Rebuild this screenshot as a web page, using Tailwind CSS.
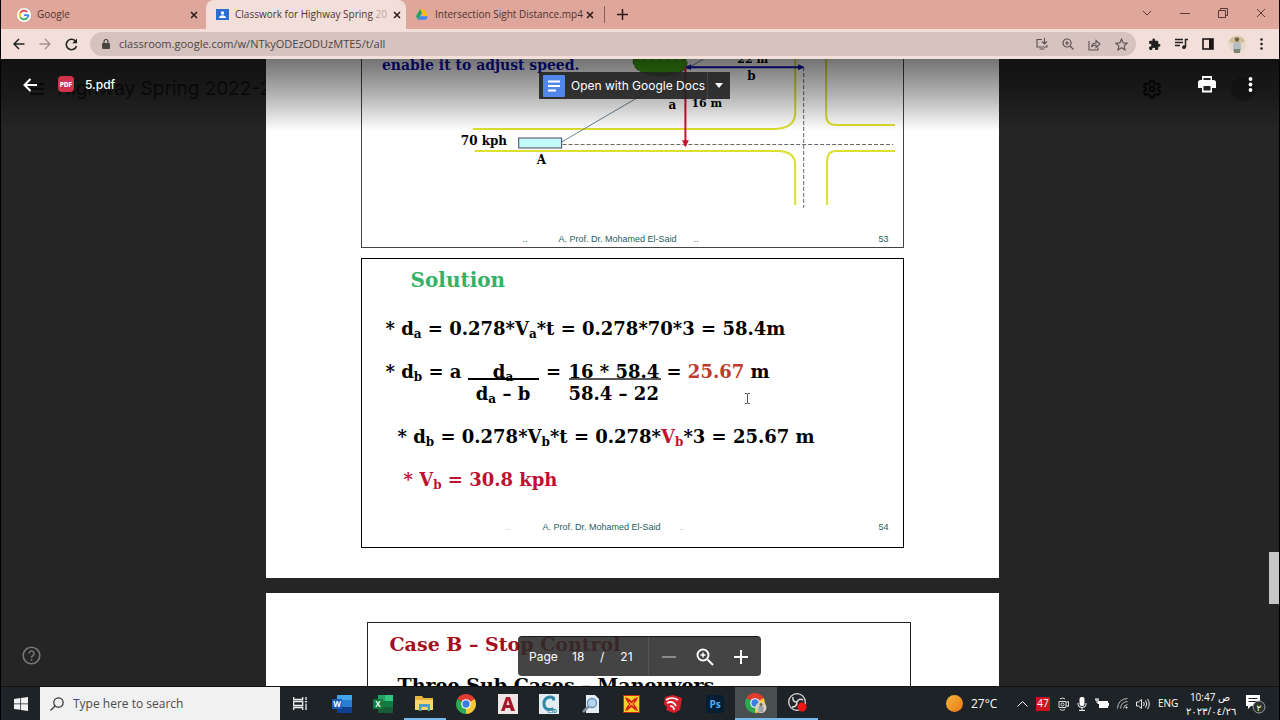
<!DOCTYPE html>
<html lang="en">
<head>
    <meta charset="UTF-8">
    <meta name="viewport" content="width=device-width, initial-scale=1.0">
    <title>5.pdf - Classwork for Highway Spring 2022</title>
    <script src="https://cdn.jsdelivr.net/npm/@tailwindcss/browser@4"></script>
</head>
<body class="bg-black font-['Open_Sans',sans-serif]">
<div class="flex flex-col h-screen px-px overflow-hidden">

    <!-- Tab strip -->
    <div class="flex items-stretch h-[29px] shrink-0 bg-[#dfa79b] text-[10px] text-[#4f3330]">
        <div class="flex items-center w-[205px] pl-4 pr-1">
            <svg class="size-[14px] mr-[6px]" viewBox="0 0 24 24"><circle cx="12" cy="12" r="12" fill="#fff"/><path d="M17.5 7A7.4 7.4 0 0 0 5.6 8.4" fill="none" stroke="#ea4335" stroke-width="3"/><path d="M5.6 8.4a7.4 7.4 0 0 0 0 7.2" fill="none" stroke="#fbbc05" stroke-width="3"/><path d="M5.6 15.6a7.4 7.4 0 0 0 11.4 2" fill="none" stroke="#34a853" stroke-width="3"/><path d="M17 17.6a7.4 7.4 0 0 0 2.4-5.6H12" fill="none" stroke="#4285f4" stroke-width="3"/></svg>
            <span class="flex-1">Google</span>
            <button aria-label="Close tab" class="p-1"><svg class="size-2" viewBox="0 0 8 8" stroke="#2b1a18" stroke-width="1.5"><path d="M1 1l6 6M7 1l-6 6"/></svg></button>
        </div>
        <div class="flex items-center w-[200px] pl-[10px] pr-[5px] rounded-t-lg bg-[#f3dfd9]">
            <svg class="w-[13px] h-[11px] mr-[6px] shrink-0" viewBox="0 0 26 22"><rect width="26" height="22" fill="#2a6fd0"/><circle cx="13" cy="8" r="3.4" fill="#fff"/><path d="M6 18c0-4 4-5.500 7-5.500s7 1.500 7 5.500z" fill="#fff"/></svg>
            <span class="flex-1 whitespace-nowrap">Classwork for Highway Spring <span class="text-[#b9a39f]">20</span></span>
            <button aria-label="Close tab" class="py-1"><svg class="size-2" viewBox="0 0 8 8" stroke="#2b1a18" stroke-width="1.5"><path d="M1 1l6 6M7 1l-6 6"/></svg></button>
        </div>
        <div class="flex items-center w-[198px] pl-[10px] pr-[10px]">
            <svg class="w-3 h-[11px] mr-[7px] shrink-0" viewBox="0 0 24 21"><path d="M8 0h8l8 14h-8z" fill="#fbbc05"/><path d="M8 0l4 7-8 14-4-7z" fill="#1ea362"/><path d="M8 14h16l-4 7H4z" fill="#4285f4"/></svg>
            <span class="flex-1 whitespace-nowrap">Intersection Sight Distance.mp4</span>
            <button aria-label="Close tab" class="py-1"><svg class="size-2" viewBox="0 0 8 8" stroke="#2b1a18" stroke-width="1.5"><path d="M1 1l6 6M7 1l-6 6"/></svg></button>
        </div>
        <div class="w-px my-[6px] bg-[#8a5f57]"></div>
        <button aria-label="New tab" class="px-3"><svg class="size-[11px]" viewBox="0 0 11 11" stroke="#2b1a18" stroke-width="1.5"><path d="M5.500 0v11M0 5.500h11"/></svg></button>
        <div class="flex items-center gap-7 ml-auto mr-[13px] pb-1">
            <button aria-label="Search tabs"><svg class="size-[10px]" viewBox="0 0 10 10" fill="none" stroke="#5a3833"><path d="M1 3l4 4 4-4"/></svg></button>
            <button aria-label="Minimize"><svg class="size-[10px]" viewBox="0 0 10 10" stroke="#5a3833"><path d="M0 5.500h10"/></svg></button>
            <button aria-label="Restore"><svg class="size-[10px]" viewBox="0 0 10 10" fill="none" stroke="#5a3833"><path d="M.5 2.500h7v7h-7zM2.500 2.500v-2h7v7h-2"/></svg></button>
            <button aria-label="Close"><svg class="size-[10px]" viewBox="0 0 10 10" stroke="#5a3833"><path d="M1 1l8 8M9 1l-8 8"/></svg></button>
        </div>
    </div>

    <!-- Address bar -->
    <div class="flex items-center h-[30px] shrink-0 bg-[#f3dfd9] pl-3 pr-4">
        <button aria-label="Back"><svg class="size-3" viewBox="0 0 12 12" fill="none" stroke="#222" stroke-width="1.5"><path d="M11.500 6H1M6 1L1 6l5 5"/></svg></button>
        <button aria-label="Forward" class="ml-[14px]"><svg class="size-3" viewBox="0 0 12 12" fill="none" stroke="#a3918e" stroke-width="1.300"><path d="M.5 6H11M6 1l5 5-5 5"/></svg></button>
        <button aria-label="Reload" class="ml-[14px]"><svg class="size-[13px]" viewBox="0 0 13 13" fill="none" stroke="#222" stroke-width="1.600"><path d="M10.800 3.500A5.200 5.200 0 1 0 11.500 8"/><path d="M12 .5v4.800H7.200z" fill="#222" stroke="none"/></svg></button>
        <div class="flex flex-1 items-center h-6 ml-3 pl-3 pr-2 rounded-full bg-[#d6c3c0]">
            <svg class="w-2 h-[10px]" viewBox="0 0 8 10"><rect y="4" width="8" height="6" rx="1" fill="#4a4443"/><path d="M2 4V2.500a2 2 0 0 1 4 0V4" fill="none" stroke="#4a4443" stroke-width="1.200"/></svg>
            <input aria-label="Address" type="text" value="classroom.google.com/w/NTkyODEzODUzMTE5/t/all" class="flex-1 ml-[9px] bg-transparent text-[11px] text-[#4d4543] outline-none">
            <div class="flex items-center gap-[14px] text-[#5c5150]">
                <button aria-label="Install"><svg class="size-3" viewBox="0 0 12 12" fill="none" stroke="currentColor" stroke-width="1.100"><path d="M6 1.500H1v7.500h10V7M3.500 11h5M8.500 0v5.500M6 3.500l2.500 2.500L11 3.500"/></svg></button>
                <button aria-label="Zoom"><svg class="size-3" viewBox="0 0 12 12" fill="none" stroke="currentColor" stroke-width="1.200"><circle cx="5" cy="5" r="4"/><path d="M8 8l3.500 3.500M3 5h4M5 3v4"/></svg></button>
                <button aria-label="Share"><svg class="size-[13px]" viewBox="0 0 13 13" fill="none" stroke="currentColor" stroke-width="1.100"><path d="M1 3v9h9V9.500M3.500 9c.5-3 2.500-4 4.500-4V2.500L12 6 8 9.500V7C6 7 4.500 7.500 3.500 9z"/></svg></button>
                <button aria-label="Bookmark"><svg class="size-[13px]" viewBox="0 0 24 24" fill="none" stroke="currentColor" stroke-width="2"><path d="M12 2l3 7 7.500.6-5.700 5 1.700 7.400-6.500-4-6.500 4 1.700-7.400-5.700-5L9 9z"/></svg></button>
            </div>
        </div>
        <div class="flex items-center gap-[14px] ml-3">
            <button aria-label="Extensions"><svg class="size-[13px]" viewBox="0 0 24 24" fill="#222"><path d="M20.500 11H19V7a2 2 0 0 0-2-2h-4V3.500a2.500 2.500 0 0 0-5 0V5H4a2 2 0 0 0-2 2v3.800h1.500a2.700 2.700 0 0 1 0 5.400H2V20a2 2 0 0 0 2 2h3.800v-1.500a2.700 2.700 0 0 1 5.400 0V22H17a2 2 0 0 0 2-2v-4h1.500a2.500 2.500 0 0 0 0-5z"/></svg></button>
            <button aria-label="Media"><svg class="w-[13px] h-3" viewBox="0 0 13 12" fill="none" stroke="#222" stroke-width="1.500"><path d="M0 1.500h8M0 4.500h8M0 7.500h5M10.500 9V1.500H13"/><circle cx="9" cy="9.200" r="1.900" fill="#222" stroke="none"/></svg></button>
            <button aria-label="Side panel"><svg class="w-3 h-3" viewBox="0 0 12 12"><rect x="1" y="1" width="10" height="10" fill="none" stroke="#1c1414" stroke-width="1.600"/><rect x="7" y="1" width="4" height="10" fill="#1c1414"/></svg></button>
            <button aria-label="Profile"><svg class="size-[18px]" viewBox="0 0 18 18"><circle cx="9" cy="9" r="9" fill="#e5d8c6"/><path d="M1 6q4-6 8-4 5-1 8 4l-3 2H3z" fill="#cfc09c"/><circle cx="9" cy="4.500" r="2.200" fill="#7a6345"/><path d="M5 16V9q4-4 8 0v7z" fill="#b7bcc3"/><path d="M6 14h6v4H6z" fill="#7d8377"/></svg></button>
            <button aria-label="Menu"><svg class="w-[3px] h-3" viewBox="0 0 3 12" fill="#222"><circle cx="1.500" cy="1.500" r="1.300"/><circle cx="1.500" cy="6" r="1.300"/><circle cx="1.500" cy="10.500" r="1.300"/></svg></button>
        </div>
    </div>

    <!-- PDF viewer -->
    <main class="relative flex flex-1 min-h-0 overflow-hidden bg-[#252525]">
        <div class="flex-1 flex flex-col items-center gap-[15px]">

            <section class="w-[733px] shrink-0 px-[95px] pb-[30px] bg-white">
                <!-- slide 53 -->
                <div class="border border-t-0 border-[#444] h-[189px] flex flex-col">
                    <svg class="w-full h-[170px] shrink-0 font-['DejaVu_Serif',serif] font-bold" viewBox="0 0 542 170" font-size="12">
                        <defs>
                            <marker id="blue" viewBox="0 0 6 6" refX="5" refY="3" markerWidth="6" markerHeight="6" markerUnits="userSpaceOnUse" orient="auto-start-reverse"><path d="M0 0l6 3-6 3z" fill="#0a0ab0"/></marker>
                            <marker id="red" viewBox="0 0 6 6" refX="5" refY="3" markerWidth="7" markerHeight="7" markerUnits="userSpaceOnUse" orient="auto"><path d="M0 0l6 3-6 3z" fill="#c8102e"/></marker>
                        </defs>
                        <g fill="none" stroke="#dbdf2e" stroke-width="2">
                            <path d="M111 70H414Q434 69 434 54V0"/>
                            <path d="M465 0V56Q465 66 475 66H534"/>
                            <path d="M113 92H418Q434 93 434 106V146"/>
                            <path d="M466 146V102Q466 92 475 92H534"/>
                        </g>
                        <path d="M201 85.500H532M442.500 8V149" fill="none" stroke="#666" stroke-dasharray="4 2"/>
                        <path d="M200 83L342 0" stroke="#6b8494" stroke-width="1"/>
                        <path d="M272 0H325Q328 8 318 13Q298 21 280 13Q270 8 272 0z" fill="#3fa312" stroke="#256608" stroke-dasharray="5 3"/>
                        <path d="M325 8H442" stroke="#0a0ab0" stroke-width="2" marker-start="url(#blue)" marker-end="url(#blue)"/>
                        <path d="M324 8V87" stroke="#d01030" stroke-width="2" marker-end="url(#red)"/>
                        <rect x="157" y="79" width="43" height="10" fill="#c4fafa" stroke="#446"/>
                        <text x="20" y="11" font-size="14" fill="#0a0ab0">enable it to adjust speed.</text>
                        <text x="376" y="4" font-size="11">22 m</text>
                        <text x="386" y="21">b</text>
                        <text x="307" y="50">a</text>
                        <text x="330" y="48" font-size="11">16 m</text>
                        <text x="99" y="86">70 kph</text>
                        <text x="175" y="105">A</text>
                    </svg>
                    <div class="flex items-start mt-px pl-[161px] pr-[14px] h-[18px] font-['Liberation_Sans',sans-serif] text-[9px] leading-[18px] text-[#27605c]">
                        <span>..</span><span class="ml-[31px]">A. Prof. Dr. Mohamed El-Said</span><span class="ml-[17px]">..</span><span class="ml-auto">53</span>
                    </div>
                </div>

                <!-- slide 54 -->
                <div class="mt-[10px] border border-black h-[290px] pt-[10px] flex flex-col font-['DejaVu_Serif',serif] font-bold text-[18px] leading-[22px] whitespace-nowrap text-black">
                    <h2 class="pl-[49px] text-xl leading-[22px] text-[#35b265]">Solution</h2>
                    <p class="h-[22px] mt-[27px] pl-6">* d<sub class="text-xs leading-none">a</sub> = 0.278*V<sub class="text-xs leading-none">a</sub>*t = 0.278*70*3 = 58.4m</p>
                    <div class="flex mt-[21px] h-11 pl-6">
                        <p class="w-[82px]">* d<sub class="text-xs leading-none">b</sub> = a</p>
                        <div class="w-[71px] text-center">
                            <p class="h-[19px] border-b-2 border-black">d<sub class="text-xs leading-none">a</sub></p>
                            <p class="mt-[3px]">d<sub class="text-xs leading-none">a</sub> – b</p>
                        </div>
                        <p class="w-[30px] text-center">=</p>
                        <div class="w-[92px]">
                            <p class="h-[19px] border-b-2 border-[#555]">16 * 58.4</p>
                            <p class="mt-[3px]">58.4 – 22</p>
                        </div>
                        <p class="pl-[6px]">= <span class="text-[#c0392b]">25.67</span> m</p>
                    </div>
                    <p class="h-[22px] mt-[21px] pl-9">* d<sub class="text-xs leading-none">b</sub> = 0.278*V<sub class="text-xs leading-none">b</sub>*t = 0.278*<span class="text-[#c0102f]">V<sub class="text-xs leading-none">b</sub></span>*3 = 25.67 m</p>
                    <p class="h-[22px] mt-[21px] pl-[42px] text-[#c0102f]">* V<sub class="text-xs leading-none">b</sub> = 30.8 kph</p>
                    <div class="flex items-center mt-auto mb-[10px] pl-[144px] pr-[14px] h-5 font-['Liberation_Sans',sans-serif] font-normal text-[9px] text-[#27605c]">
                        <span class="text-[#9bb]">..</span><span class="ml-[32px]">A. Prof. Dr. Mohamed El-Said</span><span class="ml-[19px] text-[#9bb]">..</span><span class="ml-auto">54</span>
                    </div>
                </div>
            </section>

            <section class="w-[733px] shrink-0 pl-[101px] pr-[88px] pt-[29px] bg-white">
                <div class="border border-[#222] h-[289px] pt-[10px] font-['DejaVu_Serif',serif] font-bold text-[19px] leading-[22px] whitespace-nowrap">
                    <h2 class="pl-[22px] text-[#a50d1c]">Case B – Stop Control</h2>
                    <p class="pl-[30px] mt-[19px] text-black">Three Sub Cases – Maneuvers</p>
                </div>
            </section>
        </div>

        <!-- scrollbar -->
        <div class="w-4 pl-[6px] pt-[493px]">
            <div class="w-full h-[52px] bg-[#c6c6c6]"></div>
        </div>

        <!-- text cursor -->
        <svg class="absolute left-[743px] top-[334px] w-[7px] h-[11px]" viewBox="0 0 7 11" fill="none" stroke="#555"><path d="M1 .5h2l.5.5.5-.5h2M3.500 1v9M1 10.500h2l.5-.5.5.5h2"/></svg>

        <!-- classroom header dimmed under the viewer -->
        <div class="absolute left-14 top-[14px] w-[209px] overflow-hidden whitespace-nowrap font-['Inter',sans-serif] text-[19px] leading-[32px] text-[#0c0c0c]">Highway Spring 2022-2</div>
        <svg class="absolute left-[30px] top-[24px] w-[13px] h-3" viewBox="0 0 13 12" stroke="#0c0c0c" stroke-width="2"><path d="M0 1h13M0 6h13M0 11h13"/></svg>
        <svg class="absolute right-[117px] top-[20px] size-5" viewBox="0 0 24 24" fill="none" stroke="#0a0a0a" stroke-width="2.500"><path d="M10 2h4l.6 3 2.500 1.400 2.900-1 2 3.400-2.300 2v2.800l2.300 2-2 3.400-2.900-1L14.600 19.400 14 22h-4l-.6-2.600L6.900 18l-2.900 1-2-3.400 2.300-2v-2.800L2 8.800l2-3.400 2.900 1L9.400 5z"/><circle cx="12" cy="12" r="3"/></svg>
        <div class="absolute right-[24px] top-[18px] size-6 rounded-full bg-[#1c1c1c]"></div>

        <!-- viewer top bar -->
        <header class="absolute inset-x-0 top-0 h-[72px] bg-linear-to-b from-black/55 via-black/30 to-transparent font-['Inter',sans-serif] text-white">
            <div class="flex items-start pl-[22px] pr-[26px] pt-3">
                <button aria-label="Close viewer" class="mt-[7px]"><svg class="size-[14px]" viewBox="0 0 14 14" fill="none" stroke="#fff" stroke-width="2"><path d="M14 7H1.500M7.500 1l-6 6 6 6"/></svg></button>
                <span class="flex items-center justify-center ml-[21px] mt-[5px] w-4 h-4 rounded-sm bg-[#d0344a] text-[6px] font-black">PDF</span>
                <span class="ml-[11px] mt-1 text-xs leading-[20px] font-medium">5.pdf</span>
                <div class="ml-auto flex items-center gap-8 mt-1">
                    <button aria-label="Print"><svg class="w-[18px] h-[18px]" viewBox="0 0 18 18"><path d="M4 1h10v4H4z" fill="#fff"/><path d="M2.500 5h13A2.500 2.500 0 0 1 18 7.500V13H0V7.500A2.500 2.500 0 0 1 2.500 5z" fill="#fff"/><path d="M4 10h10v7.500H4z" fill="#fff"/><path d="M5.500 11h7v4.500h-7zM5.500 3h7v2h-7z" fill="#222"/></svg></button>
                    <button aria-label="More actions"><svg class="w-[5px] h-[15px]" viewBox="0 0 5 15" fill="#fff"><circle cx="2.500" cy="2" r="1.900"/><circle cx="2.500" cy="7.500" r="1.900"/><circle cx="2.500" cy="13" r="1.900"/></svg></button>
                </div>
            </div>
        </header>
        <div class="absolute left-[538px] top-[13px] flex h-[27px] items-center bg-[#222]/90 font-['Inter',sans-serif] text-white">
            <button class="flex items-center h-full w-[168px] pl-1 text-xs whitespace-nowrap">
                <svg class="size-[22px] mr-[6px]" viewBox="0 0 22 22"><rect width="22" height="22" rx="1" fill="#5187e8"/><path d="M5 6.500h12M5 11h12M5 15.500h8" stroke="#fff" stroke-width="2"/></svg>
                Open with Google Docs
            </button>
            <button aria-label="Open with" class="flex items-center justify-center h-full w-[23px] border-l border-[#444]"><svg class="w-2 h-[5px]" viewBox="0 0 8 5" fill="#fff"><path d="M0 0h8L4 5z"/></svg></button>
        </div>

        <!-- page / zoom controls -->
        <div class="absolute left-[517px] bottom-[10px] flex h-10 rounded-sm bg-[#2a2a2a]/88 border-t border-black/60 font-['Inter',sans-serif] text-xs text-white">
            <div class="flex items-center w-[130px] pl-[11px]">
                <label for="page" class="w-[43px]">Page</label>
                <input id="page" type="text" value="18" class="w-6 bg-transparent outline-none">
                <span class="ml-1">/</span>
                <span class="ml-4">21</span>
            </div>
            <div class="flex items-center gap-[20px] pl-[13px] pr-[13px] border-l border-[#555]">
                <button aria-label="Zoom out"><svg class="w-[14px] h-[14px]" viewBox="0 0 14 14" stroke="#8c8c8c" stroke-width="2"><path d="M0 7h14"/></svg></button>
                <button aria-label="Fit"><svg class="size-[18px]" viewBox="0 0 18 18" fill="none" stroke="#fff" stroke-width="2"><circle cx="7" cy="7" r="5.500"/><path d="M11 11l6 6"/><path d="M4.500 7h5M7 4.500v5" stroke-width="1.500"/></svg></button>
                <button aria-label="Zoom in"><svg class="w-[14px] h-[14px]" viewBox="0 0 14 14" stroke="#fff" stroke-width="2"><path d="M0 7h14M7 0v14"/></svg></button>
            </div>
        </div>

        <button aria-label="Help" class="absolute left-[21px] bottom-[21px]"><svg class="size-[19px]" viewBox="0 0 19 19" fill="none" stroke="#777" stroke-width="1.600"><circle cx="9.500" cy="9.500" r="8.300"/><path d="M7 7.500a2.500 2.500 0 1 1 3.800 2.200c-.9.500-1.300 1-1.300 2M9.500 13v1.800"/></svg></button>
    </main>

    <!-- Taskbar -->
    <footer class="flex items-stretch h-[34px] shrink-0 border-t border-[#111] bg-[#1d2327] text-white">
        <button aria-label="Start" class="flex items-center justify-center w-[39px]"><svg class="size-[14px]" viewBox="0 0 14 14" fill="#f2f2f2"><path d="M0 2l6.300-.9v5.500H0zM7 1l7-1v6.600H7zM0 7.300h6.300v5.500L0 12zM7 7.300h7V14l-7-1z"/></svg></button>
        <label class="flex items-center w-[240px] pl-[10px] bg-[#f1f1f1]">
            <svg class="size-[14px] mr-[9px]" viewBox="0 0 14 14" fill="none" stroke="#333" stroke-width="1.200"><circle cx="8.500" cy="5.500" r="4.700"/><path d="M5 9L.5 13.500"/></svg>
            <input type="text" aria-label="Search" placeholder="Type here to search" class="w-48 bg-transparent text-xs placeholder:text-[#4a4a4a] outline-none">
        </label>
        <nav class="flex w-[538px] *:flex-1 *:flex *:items-center *:justify-center">
            <button aria-label="Task view"><svg class="w-[15px] h-[13px]" viewBox="0 0 15 13" fill="none" stroke="#eee" stroke-width="1.300"><path d="M.7 0v2.500h9V0M.7 13v-2.500h9V13M.7 4.500h9v4h-9zM13 0v3M13 6.500V13M11.800 4.700h2.400"/></svg></button>
            <button aria-label="Word"><svg class="w-5 h-[18px]" viewBox="0 0 20 18"><rect x="5" width="15" height="18" rx="1" fill="#2b7cd3"/><rect x="5" width="15" height="5" fill="#41a5ee"/><rect x="5" y="12" width="15" height="6" fill="#103f91"/><rect y="4" width="10" height="10" rx="1" fill="#185abd"/><text x="5" y="12" font-size="8" font-weight="700" text-anchor="middle" fill="#fff">W</text></svg></button>
            <button aria-label="Excel"><svg class="w-5 h-[18px]" viewBox="0 0 20 18"><rect x="5" width="15" height="18" rx="1" fill="#107c41"/><rect x="5" width="8" height="6" fill="#21a366"/><rect x="12" width="8" height="6" fill="#33c481"/><rect x="5" y="12" width="15" height="6" fill="#185c37"/><rect y="4" width="10" height="10" rx="1" fill="#107c41"/><text x="5" y="12" font-size="8" font-weight="700" text-anchor="middle" fill="#fff">X</text></svg></button>
            <button aria-label="File Explorer" class="border-b-2 border-[#76b9ed] pt-[2px]"><svg class="w-[19px] h-[15px]" viewBox="0 0 19 15"><path d="M0 0h7l1.500 2H18v11H0z" fill="#e8b341"/><path d="M0 4h18v10H0z" fill="#fbd76b"/><path d="M4 8h11v7h-2.500v-4h-6v4H4z" fill="#4a9bd4"/></svg></button>
            <button aria-label="Chrome"><svg class="size-5" viewBox="0 0 20 20"><path d="M10 10L1.340 5A10 10 0 0 1 18.660 5z" fill="#e33b2e"/><path d="M10 10l8.660-5A10 10 0 0 1 10 20z" fill="#fcc934"/><path d="M10 10v10A10 10 0 0 1 1.340 5z" fill="#2da94f"/><circle cx="10" cy="10" r="4.800" fill="#fff"/><circle cx="10" cy="10" r="3.700" fill="#3b7de0"/></svg></button>
            <button aria-label="AutoCAD"><svg class="size-5" viewBox="0 0 20 20"><rect width="20" height="20" fill="#efe6e6"/><path d="M3 17L8 3h4l5 14h-4l-1-3H7.500l-1 3zM8.500 11h3L10 6z" fill="#a5182a"/></svg></button>
            <button aria-label="Civil 3D"><svg class="size-5" viewBox="0 0 20 20"><rect width="20" height="20" fill="#e3ecf0"/><path d="M14.500 6.500V4Q12 2.500 9.500 3.200 5 4.500 5 9.500q0 6 5.500 6 2 0 4-1" fill="none" stroke="#3488a8" stroke-width="3"/><text x="18" y="19" font-size="5" font-weight="700" text-anchor="end" fill="#3488a8">C3D</text></svg></button>
            <button aria-label="Search files"><svg class="w-[17px] h-[18px]" viewBox="0 0 17 18"><path d="M4 0h9l4 4v14H4z" fill="#e4edf6"/><circle cx="10" cy="8" r="4.500" fill="#b5d4ee" stroke="#6b8fb5" stroke-width="1.300"/><path d="M6.500 11.500L1 17" stroke="#7d8ea0" stroke-width="2.500"/></svg></button>
            <button aria-label="Converter"><svg class="w-[17px] h-[18px]" viewBox="0 0 17 18"><rect x=".5" y=".5" width="16" height="17" fill="#f7cf2d" stroke="#c62a14"/><path d="M2 2q4 1 6.500 4Q11 3 15 2q-1 4-4 7 3 3 4 7-4-1-6.500-4Q6 15 2 16q1-4 4-7-3-3-4-7z" fill="#d9241a"/><path d="M6 7l5 4M11 7l-5 4" stroke="#f7cf2d"/></svg></button>
            <button aria-label="SketchUp"><svg class="size-[18px]" viewBox="0 0 18 18"><path d="M1 2l8-2 9 3-2 12-6 3-8-3 1-3-3-3z" fill="#d81f2c"/><path d="M2 5q6-4 12 0M3 8q6-3 9 3M6 11q4 0 4 4" fill="none" stroke="#fff" stroke-width="1.700"/></svg></button>
            <button aria-label="Photoshop"><svg class="w-[18px] h-[18px]" viewBox="0 0 18 18"><rect width="18" height="18" rx="3" fill="#041e36"/><text x="9" y="13" font-size="10" font-weight="700" text-anchor="middle" fill="#4fb0f5">Ps</text></svg></button>
            <button aria-label="Chrome window" class="bg-[#494e51] border-b-2 border-[#76b9ed]"><svg class="w-[22px] h-5" viewBox="0 0 22 20"><path d="M10 10L1.340 5A10 10 0 0 1 18.660 5z" fill="#e33b2e"/><path d="M10 10l8.660-5A10 10 0 0 1 10 20z" fill="#fcc934"/><path d="M10 10v10A10 10 0 0 1 1.340 5z" fill="#2da94f"/><circle cx="10" cy="10" r="4.800" fill="#fff"/><circle cx="10" cy="10" r="3.700" fill="#3b7de0"/><circle cx="16" cy="14.500" r="5.500" fill="#d8cfbd"/><path d="M13.500 19v-5q2.500-3 5 0v5z" fill="#9ba2a8"/><circle cx="16" cy="11.500" r="1.500" fill="#7a6345"/></svg></button>
            <button aria-label="OBS" class="border-b-2 border-[#76b9ed]"><svg class="size-[19px]" viewBox="0 0 19 19"><circle cx="9" cy="9" r="8.300" fill="#24262a" stroke="#ddd" stroke-width="1.300"/><path d="M9 9Q4 9 5 4M9 9q2-4 6-2M9 9q0 5-5 5" fill="none" stroke="#ddd" stroke-width="1.500"/><circle cx="14" cy="14" r="4.500" fill="#f01515"/></svg></button>
        </nav>
        <div class="flex items-center ml-auto pr-[13px] text-xs">
            <svg class="size-[17px]" viewBox="0 0 17 17"><defs><linearGradient id="sun" x2="1" y2="1"><stop stop-color="#f7b538"/><stop offset="1" stop-color="#e8791a"/></linearGradient></defs><circle cx="8.500" cy="8.500" r="8.500" fill="url(#sun)"/></svg>
            <span class="w-[46px] ml-2">27°C</span>
            <div class="flex items-center gap-2">
                <svg class="w-[11px] h-[6px]" viewBox="0 0 11 6" fill="none" stroke="#fff"><path d="M.5 5.500l5-5 5 5"/></svg>
                <span class="flex items-center justify-center w-[14px] h-[14px] bg-[#cc1322] text-[10px]">47</span>
                <svg class="w-[11px] h-[14px]" viewBox="0 0 11 14" fill="none" stroke="#ddd"><path d="M1 4.500h7v6H1zM8 5.500l2.500-1v5L8 8.500M2 2q2.500-2 5 0M2 12.500q2.500 1.500 5 0"/><circle cx="4.500" cy="7.500" r="1.500"/></svg>
                <svg class="w-[10px] h-[14px]" viewBox="0 0 10 14"><rect x="2.500" width="5" height="9" rx="2" fill="#fff"/><path d="M1 6v1.500q0 3 4 3t4-3V6M5 10.500V13M2 13.400h6" fill="none" stroke="#fff"/></svg>
                <svg class="w-[14px] h-[11px]" viewBox="0 0 14 11"><path d="M3 3h10v7H4V6H3zM13 5h1v3h-1z" fill="#fff"/><path d="M0 2h4M1 0v2M3 0v2M2 2v3h2" stroke="#fff" fill="none"/></svg>
                <svg class="w-[11px] h-[11px]" viewBox="0 0 11 11" fill="none" stroke="#bbb"><path d="M.5 10.500Q1 1 10.500.5M3.500 10.500Q4 4 10.500 3.500M6.500 10.500Q7 7 10.500 6.500"/><circle cx="9.500" cy="9.500" r="1" fill="#fff" stroke="none"/></svg>
                <svg class="w-[14px] h-[12px]" viewBox="0 0 14 12" fill="none" stroke="#eee"><path d="M.5 4h2L5.500 1.500v9L2.500 8h-2zM7.500 4q1.500 2 0 4M9.500 2.500q2.500 3.500 0 7M11.500 1q3.500 5 0 10"/></svg>
                <span class="text-[10px] w-5">ENG</span>
            </div>
            <div class="ml-2 w-[48px] text-center text-[10px] leading-[14px] whitespace-nowrap font-['Open_Sans','DejaVu_Sans',sans-serif]">
                <p>10:47 ص</p>
                <p>٢٠٢٣/٠٤/٢٦</p>
            </div>
            <button aria-label="Notifications" class="ml-3"><svg class="w-5 h-5" viewBox="0 0 20 20"><path d="M0 1h14v11H5l-3 3v-3H0z" fill="#fff"/><path d="M2.500 4.500h9M2.500 7.500h9" stroke="#1d2327"/><circle cx="13" cy="13" r="6" fill="#2b3236" stroke="#999"/><text x="13" y="16.500" font-size="9" text-anchor="middle" fill="#fff" font-family="DejaVu Sans">٢</text></svg></button>
        </div>
    </footer>
</div>
</body>
</html>
